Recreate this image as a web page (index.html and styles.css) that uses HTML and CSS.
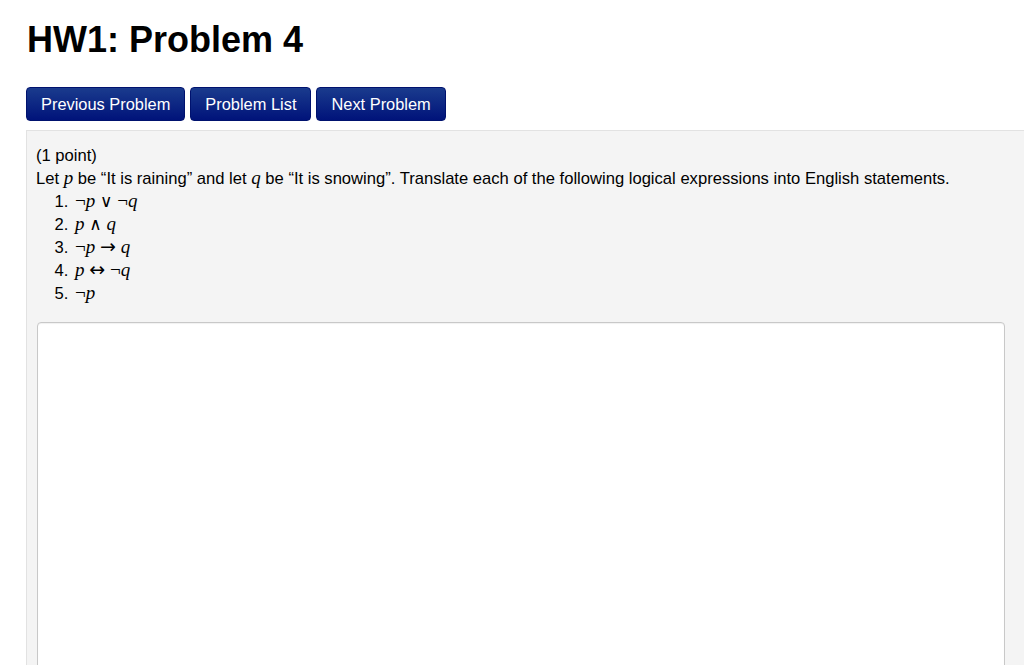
FILE: index.html
```html
<!DOCTYPE html>
<html>
<head>
<meta charset="utf-8">
<link rel="stylesheet" href="styles.css">
</head>
<body>
<div class="page">
  <h1 class="title">HW1: Problem 4</h1>
  <div class="nav">
    <button class="btn">Previous Problem</button>
    <button class="btn">Problem List</button>
    <button class="btn">Next Problem</button>
  </div>
  <div class="panel">
    <div class="line">(1 point)</div>
    <div class="line">Let <span class="mi">p</span> be “It is raining” and let <span class="mi">q</span> be “It is snowing”. Translate each of the following logical expressions into English statements.</div>
    <ol class="list">
      <li><span class="math">¬<span class="mi">p</span> <span class="mo">∨</span> ¬<span class="mi">q</span></span></li>
      <li><span class="math"><span class="mi">p</span> <span class="mo">∧</span> <span class="mi">q</span></span></li>
      <li><span class="math">¬<span class="mi">p</span> <span class="mo arrow">→</span> <span class="mi">q</span></span></li>
      <li><span class="math"><span class="mi">p</span> <span class="mo arrow">↔</span> ¬<span class="mi">q</span></span></li>
      <li><span class="math">¬<span class="mi">p</span></span></li>
    </ol>
    <textarea class="answer"></textarea>
  </div>
</div>
</body>
</html>
```
FILE: styles.css
```css
html, body {
  margin: 0;
  padding: 0;
  background: #ffffff;
  overflow: hidden;
}
body {
  font-family: "Liberation Sans", Arial, Helvetica, sans-serif;
  color: #000;
}
.page {
  padding: 20px 0 0 26px;
}
.title {
  margin: 0 0 27px 1px;
  font-size: 36px;
  line-height: 40px;
  font-weight: bold;
}
.nav {
  display: flex;
  gap: 5px;
  margin-bottom: 9px;
}
.btn {
  font-family: "Liberation Sans", Arial, Helvetica, sans-serif;
  font-size: 16.4px;
  color: #fff;
  height: 34px;
  padding: 0 14px;
  border: 1px solid #00126e;
  border-radius: 4px;
  background: linear-gradient(to bottom, #1a3b8d, #00137a);
  cursor: pointer;
}
.panel {
  width: 1020px;
  height: 600px;
  background: #f4f4f4;
  border-top: 1px solid #e2e2e2;
  border-left: 1px solid #e2e2e2;
  padding: 13px 0 0 9px;
  font-size: 16.6px;
  line-height: 23px;
}
.list {
  margin: 0;
  padding-left: 37px;
}
.list li {
  padding-left: 2px;
  line-height: 23px;
}
.math, .mi {
  font-family: "Liberation Serif", "Times New Roman", serif;
  font-size: 19px;
  line-height: 1;
}
.mi {
  font-style: italic;
}
.mo {
  font-family: "DejaVu Serif", "Liberation Serif", serif;
  font-size: 17px;
  line-height: 1;
}
.arrow {
  font-family: "DejaVu Sans", sans-serif;
  font-size: 19px;
}
.answer {
  display: block;
  margin-top: 17px;
  margin-left: 1px;
  width: 968px;
  height: 400px;
  box-sizing: border-box;
  background: #fff;
  border: 1px solid #c8c8c8;
  border-radius: 4px;
  box-shadow: inset 0 1px 1px rgba(0,0,0,0.06);
  resize: none;
}
```
